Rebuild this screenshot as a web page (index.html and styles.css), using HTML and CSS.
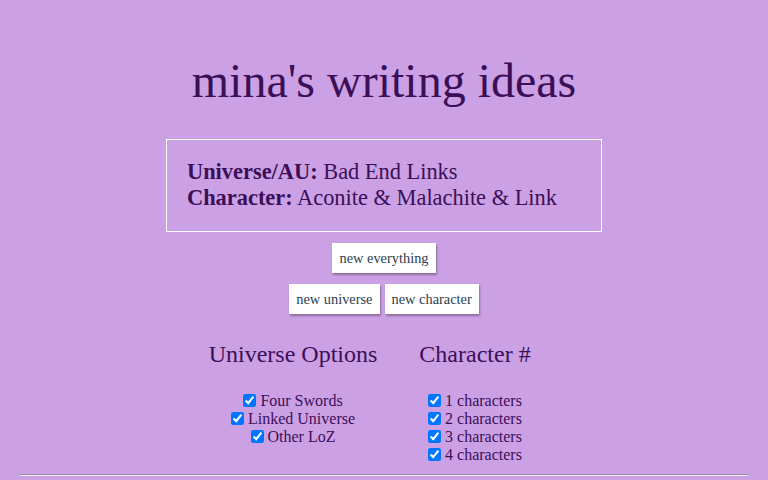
FILE: index.html
```html
<!DOCTYPE html>
<html lang="en">
<head>
<meta charset="utf-8">
<title>mina's writing ideas</title>
<link rel="stylesheet" href="styles.css">
</head>
<body>
  <h1 class="title">mina's writing ideas</h1>

  <div class="idea">
    <div><b>Universe/AU:</b> Bad End Links</div>
    <div><b>Character:</b> Aconite &amp; Malachite &amp; Link</div>
  </div>

  <div class="btn-row">
    <button class="btn">new everything</button>
  </div>
  <div class="btn-row">
    <button class="btn">new universe</button>
    <button class="btn">new character</button>
  </div>

  <div class="options">
    <div class="option-col">
      <h2 class="option-title">Universe Options</h2>
      <ul class="checks">
        <li><label><input type="checkbox" checked> Four Swords</label></li>
        <li><label><input type="checkbox" checked> Linked Universe</label></li>
        <li><label><input type="checkbox" checked> Other LoZ</label></li>
      </ul>
    </div>
    <div class="option-col">
      <h2 class="option-title">Character #</h2>
      <ul class="checks">
        <li><label><input type="checkbox" checked> 1 characters</label></li>
        <li><label><input type="checkbox" checked> 2 characters</label></li>
        <li><label><input type="checkbox" checked> 3 characters</label></li>
        <li><label><input type="checkbox" checked> 4 characters</label></li>
      </ul>
    </div>
  </div>

  <hr class="rule">
</body>
</html>
```

FILE: styles.css
```css
html, body {
  margin: 0;
  background: #cca0e4;
}

body {
  padding: 0 18px;
  font-family: "Liberation Serif", "Times New Roman", serif;
  color: #3b0f58;
  text-align: center;
}

.title {
  margin: 0;
  padding-top: 53px;
  font-size: 48px;
  font-weight: normal;
  line-height: 55px;
}

.idea {
  width: 394px;
  margin: 31px auto 0;
  padding: 19px 20px 20px;
  border: 1px solid #ffffff;
  text-align: left;
  font-size: 22.4px;
  line-height: 26px;
}

.btn-row {
  display: flex;
  justify-content: center;
  gap: 5px;
  margin-top: 11px;
}

.btn-row:first-of-type {
  margin-top: 10px;
}

.btn {
  height: 30px;
  padding: 0 7px;
  border: none;
  background: #ffffff;
  color: #2c3e50;
  font-family: "Liberation Serif", "Times New Roman", serif;
  font-size: 14.4px;
  box-shadow: 1px 2px 2px rgba(90, 70, 100, 0.55);
}

.options {
  display: grid;
  grid-template-columns: 182px 182px;
  justify-content: center;
  margin-top: 27px;
}

.option-title {
  margin: 0;
  font-size: 24px;
  font-weight: normal;
  line-height: 26px;
}

.checks {
  list-style: none;
  margin: 25px 0 0;
  padding: 0;
  font-size: 16px;
  line-height: 18px;
}

.checks input {
  margin: 0;
  width: 13px;
  height: 13px;
  vertical-align: -1px;
}

.rule {
  margin: 10px 2px 0;
  border: none;
  border-top: 1px solid #9a8aa2;
  border-bottom: 1px solid #f2eaf6;
}
```
